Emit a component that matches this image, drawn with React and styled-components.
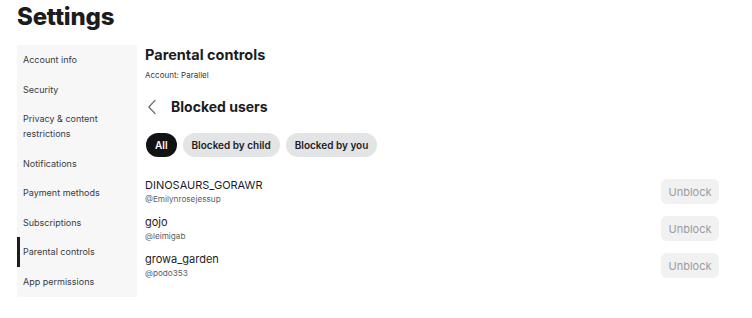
import React, { useState } from "react";
import styled, { createGlobalStyle } from "styled-components";

const GlobalStyle = createGlobalStyle`
  body {
    margin: 0;
    background: #fff;
    font-family: Inter, "Noto Sans", sans-serif;
    color: #1b1c1e;
  }
`;

const menu = [
  "Account info",
  "Security",
  "Privacy & content restrictions",
  "Notifications",
  "Payment methods",
  "Subscriptions",
  "Parental controls",
  "App permissions",
];

const users = [
  { name: "DINOSAURS_GORAWR", handle: "@Emilynrosejessup" },
  { name: "gojo", handle: "@leimigab" },
  { name: "growa_garden", handle: "@podo353" },
];

const filters = ["All", "Blocked by child", "Blocked by you"];

export default function App() {
  const [filter, setFilter] = useState(0);

  return (
    <>
      <GlobalStyle />
      <Page>
        <Title>Settings</Title>
        <Layout>
          <Sidebar>
            {menu.map((item) => (
              <NavItem key={item} active={item === "Parental controls"}>
                {item}
              </NavItem>
            ))}
          </Sidebar>
          <Main>
            <Heading>Parental controls</Heading>
            <Sub>Account: Parallel</Sub>
            <BackRow>
              <BackButton aria-label="Back">
                <svg width="10" height="16" viewBox="0 0 10 16">
                  <path d="M8 1.5 L1.8 8 L8 14.5" fill="none" stroke="#6f7176" strokeWidth="1.3" strokeLinecap="round" strokeLinejoin="round" />
                </svg>
              </BackButton>
              <SectionTitle>Blocked users</SectionTitle>
            </BackRow>
            <Pills>
              {filters.map((f, i) => (
                <Pill key={f} active={filter === i} onClick={() => setFilter(i)}>
                  {f}
                </Pill>
              ))}
            </Pills>
            <List>
              {users.map((u) => (
                <Row key={u.name}>
                  <UserInfo>
                    <Name>{u.name}</Name>
                    <Handle>{u.handle}</Handle>
                  </UserInfo>
                  <UnblockButton disabled>Unblock</UnblockButton>
                </Row>
              ))}
            </List>
          </Main>
        </Layout>
      </Page>
    </>
  );
}

const Page = styled.div`
  padding: 2px 33px 0 17px;
`;

const Title = styled.h1`
  margin: 0 0 13px;
  font-size: 24px;
  line-height: 30px;
  font-weight: 800;
  letter-spacing: -0.2px;
  color: #1b1c1e;
`;

const Layout = styled.div`
  display: flex;
  align-items: flex-start;
  gap: 8px;
`;

const Sidebar = styled.nav`
  width: 120px;
  flex-shrink: 0;
  background: #f7f7f8;
  display: flex;
  flex-direction: column;
  padding-bottom: 1px;
`;

const NavItem = styled.div`
  padding: 7px 8px 7.5px 6px;
  font-size: 9px;
  line-height: 15px;
  color: #393b3d;
  box-shadow: ${(p) => (p.active ? "inset 3px 0 0 #1b1c1e" : "none")};
`;

const Main = styled.main`
  flex: 1;
  display: flex;
  flex-direction: column;
`;

const Heading = styled.h2`
  margin: 0;
  font-size: 14.5px;
  line-height: 20px;
  font-weight: 700;
`;

const Sub = styled.div`
  margin-top: 4px;
  font-size: 8px;
  line-height: 12px;
  color: #393b3d;
`;

const BackRow = styled.div`
  margin-top: 16px;
  display: flex;
  align-items: center;
  height: 20px;
`;

const BackButton = styled.button`
  border: none;
  background: transparent;
  padding: 0;
  margin: 0 14px 0 2px;
  display: flex;
  align-items: center;
  cursor: pointer;
`;

const SectionTitle = styled.h3`
  margin: 0;
  font-size: 14px;
  line-height: 20px;
  font-weight: 700;
`;

const Pills = styled.div`
  margin-top: 16px;
  display: flex;
  gap: 6px;
  padding-left: 1px;
`;

const Pill = styled.button`
  height: 24px;
  border: none;
  border-radius: 12px;
  padding: 0 9px;
  font-family: inherit;
  font-size: 10px;
  font-weight: 600;
  background: ${(p) => (p.active ? "#111214" : "#e3e4e6")};
  color: ${(p) => (p.active ? "#fff" : "#1b1c1e")};
  cursor: pointer;
`;

const List = styled.div`
  margin-top: 16px;
  display: flex;
  flex-direction: column;
`;

const Row = styled.div`
  height: 37px;
  display: flex;
  align-items: center;
  justify-content: space-between;
`;

const UserInfo = styled.div`
  display: flex;
  flex-direction: column;
`;

const Name = styled.div`
  font-size: 11px;
  line-height: 15px;
  color: #1b1c1e;
`;

const Handle = styled.div`
  font-size: 8.2px;
  line-height: 12px;
  color: #5c5e63;
`;

const UnblockButton = styled.button`
  height: 25px;
  padding: 0 7.5px;
  border: none;
  border-radius: 6px;
  background: #f1f1f2;
  color: #9a9ca0;
  font-family: inherit;
  font-size: 11px;
`;
